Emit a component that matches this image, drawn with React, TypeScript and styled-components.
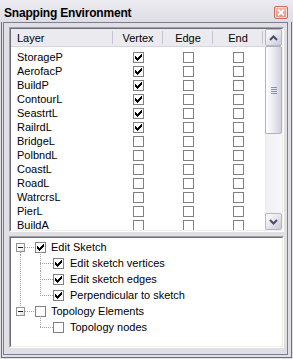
import React from 'react';
import styled, { createGlobalStyle, css } from 'styled-components';

const Global = createGlobalStyle`
  html, body { margin: 0; padding: 0; background: #fff; }
  body { font-family: "Liberation Sans", Arial, sans-serif; font-size: 11px; color: #000; }
  * { box-sizing: border-box; }
`;

const DOT = '#a3a3a3';

const Window = styled.div`
  width: 293px;
  height: 359px;
  display: flex;
  flex-direction: column;
  background: #e0dfe3;
`;

const TitleBar = styled.div`
  height: 22px;
  flex: none;
  display: flex;
  align-items: flex-start;
  justify-content: space-between;
  padding: 0 5px 0 4px;
  background: linear-gradient(#ecebf1, #dedde5);
`;

const Title = styled.span`
  font-weight: bold;
  font-size: 12px;
  letter-spacing: -0.2px;
  line-height: 14px;
  margin-top: 6px;
`;

const CloseBtn = styled.span`
  width: 14px;
  height: 13px;
  flex: none;
  margin-top: 6px;
  border: 1px solid #d06b5b;
  border-radius: 2px;
  background: linear-gradient(#f2b8aa, #e3907f);
  box-shadow: inset 0 0 0 1px #f9dcd5;
  display: flex;
  align-items: center;
  justify-content: center;
`;

const Body = styled.div`
  flex: 1;
  display: flex;
  margin: 0 1px 1px 1px;
  border: 1px solid #6c6c86;
  border-top: none;
  padding: 0 3px 2px 1px;
`;

const Frame = styled.div`
  flex: 1;
  display: flex;
  flex-direction: column;
  gap: 4px;
  border: 1px solid #7c7c96;
  padding: 4px 3px 6px 5px;
`;

const Well = styled.div<{ $h?: number }>`
  ${p => (p.$h ? css`height: ${p.$h}px; flex: none;` : css`flex: 1;`)}
  display: flex;
  border: 1px solid;
  border-color: #9f9fa6 #ffffff #ffffff #9f9fa6;
`;

const WellInner = styled.div<{ $dir?: 'row' | 'column' }>`
  flex: 1;
  display: flex;
  flex-direction: ${p => p.$dir || 'row'};
  min-height: 0;
  border: 1px solid;
  border-color: #6f6f78 #f1efe2 #f1efe2 #6f6f78;
  background: #fff;
  overflow: hidden;
`;

/* ---------- table ---------- */

const Table = styled.div`
  flex: 1;
  display: flex;
  flex-direction: column;
  min-width: 0;
`;

const Header = styled.div`
  height: 18px;
  flex: none;
  display: flex;
  background: #ebeaef;
  border-bottom: 1px solid #d6d5dd;
`;

const HeaderCell = styled.div<{ $w: number; $left?: boolean }>`
  width: ${p => p.$w}px;
  flex: none;
  padding: 2px 0 0 ${p => (p.$left ? 6 : 0)}px;
  line-height: 14px;
  text-align: ${p => (p.$left ? 'left' : 'center')};
  background: linear-gradient(#c6c5d1, #c6c5d1) right 2px / 1px 13px no-repeat;
`;

const Rows = styled.div`
  flex: 1;
  padding-top: 3px;
  overflow: hidden;
`;

const Row = styled.div`
  height: 14px;
  display: flex;
  align-items: center;
`;

const Cell = styled.div<{ $w: number; $left?: boolean }>`
  width: ${p => p.$w}px;
  flex: none;
  display: flex;
  align-items: center;
  justify-content: ${p => (p.$left ? 'flex-start' : 'center')};
  padding-left: ${p => (p.$left ? 6 : 0)}px;
  line-height: 14px;
  white-space: nowrap;
`;

/* ---------- scrollbar ---------- */

const ScrollBar = styled.div`
  width: 17px;
  flex: none;
  display: flex;
  flex-direction: column;
  background: linear-gradient(to right, #eeeef3, #f8f8fb);
`;

const ScrollBtn = styled.div`
  height: 17px;
  flex: none;
  border: 1px solid #b6b6c8;
  border-radius: 2px;
  background: linear-gradient(135deg, #fbfbfd 0%, #e3e3ec 55%, #c9c9d8 100%);
  display: flex;
  align-items: center;
  justify-content: center;
`;

const Thumb = styled.div<{ $h: number }>`
  height: ${p => p.$h}px;
  flex: none;
  border: 1px solid #b1b1c4;
  border-radius: 2px;
  background: linear-gradient(to right, #ffffff 0%, #ececf2 45%, #d0d0de 100%);
  display: flex;
  align-items: center;
  justify-content: center;
`;

const Grip = styled.div`
  width: 6px;
  height: 7px;
  background: repeating-linear-gradient(to bottom, #8f8fa8 0 1px, transparent 1px 2px);
`;

const Track = styled.div`
  flex: 1;
`;

/* ---------- checkbox ---------- */

const Box = styled.span`
  width: 11px;
  height: 11px;
  flex: none;
  border: 1px solid #808080;
  background: #fff;
  display: inline-flex;
  align-items: center;
  justify-content: center;
`;

const TICK =
  'M7 1h1v1h-1z M6 2h2v1h-2z M1 3h1v1h-1z M5 3h3v1h-3z M1 4h2v1h-2z M4 4h3v1h-3z M1 5h5v1h-5z M2 6h3v1h-3z M3 7h1v1h-1z';

function CheckBox({ checked }: { checked?: boolean }) {
  return (
    <Box>
      {checked && (
        <svg width="9" height="9" viewBox="0 0 9 9" shapeRendering="crispEdges">
          <path d={TICK} fill="#000" />
        </svg>
      )}
    </Box>
  );
}

/* ---------- tree ---------- */

const Tree = styled.div`
  flex: 1;
  padding-top: 1px;
`;

const TreeRow = styled.div`
  height: 16px;
  display: flex;
  align-items: center;
`;

const TreeLabel = styled.span<{ $gap: number }>`
  margin-left: ${p => p.$gap}px;
  line-height: 16px;
  white-space: nowrap;
`;

const vline = (top: string, bottom: string, left: number) => css`
  content: '';
  position: absolute;
  left: ${left}px;
  top: ${top};
  bottom: ${bottom};
  width: 1px;
  background: repeating-linear-gradient(to bottom, ${DOT} 0 1px, transparent 1px 2px);
`;

const ExpanderCell = styled.span<{ $prev?: boolean; $next?: boolean }>`
  position: relative;
  width: 24px;
  align-self: stretch;
  flex: none;
  display: flex;
  align-items: flex-start;
  ${p => p.$next && css`&::before { ${vline('13px', '0', 9)} }`}
  ${p => p.$prev && css`&::after { ${vline('0', '12px', 9)} }`}
`;

const Expander = styled.span`
  width: 9px;
  height: 9px;
  margin: 4px 0 0 5px;
  flex: none;
  border: 1px solid #939393;
  background: linear-gradient(135deg, #ffffff 40%, #dcdbe2 100%);
  display: flex;
  align-items: center;
  justify-content: center;
  &::before {
    content: '';
    width: 5px;
    height: 1px;
    background: #1e1e1e;
  }
`;

const HLine = styled.span`
  flex: 1;
  height: 1px;
  margin-top: 8px;
  background: repeating-linear-gradient(to right, ${DOT} 0 1px, transparent 1px 2px);
`;

const Guide = styled.span<{ $w: number; $line?: boolean }>`
  position: relative;
  width: ${p => p.$w}px;
  align-self: stretch;
  flex: none;
  ${p => p.$line && css`&::before { ${vline('0', '0', 9)} }`}
`;

const Elbow = styled.span<{ $last?: boolean; $first?: boolean }>`
  position: relative;
  width: 24px;
  align-self: stretch;
  flex: none;
  display: flex;
  &::before {
    ${p => vline(p.$first ? '-3px' : '0', p.$last ? '8px' : '0', 11)}
  }
  &::after {
    content: '';
    position: absolute;
    left: 11px;
    right: 0;
    top: 8px;
    height: 1px;
    background: repeating-linear-gradient(to right, ${DOT} 0 1px, transparent 1px 2px);
  }
`;

const layers: [string, boolean][] = [
  ['StorageP', true],
  ['AerofacP', true],
  ['BuildP', true],
  ['ContourL', true],
  ['SeastrtL', true],
  ['RailrdL', true],
  ['BridgeL', false],
  ['PolbndL', false],
  ['CoastL', false],
  ['RoadL', false],
  ['WatrcrsL', false],
  ['PierL', false],
  ['BuildA', false],
];

type Node = { label: string; checked: boolean; children: { label: string; checked: boolean }[] };

const tree: Node[] = [
  {
    label: 'Edit Sketch',
    checked: true,
    children: [
      { label: 'Edit sketch vertices', checked: true },
      { label: 'Edit sketch edges', checked: true },
      { label: 'Perpendicular to sketch', checked: true },
    ],
  },
  {
    label: 'Topology Elements',
    checked: false,
    children: [{ label: 'Topology nodes', checked: false }],
  },
];

const COLS = { layer: 102, col: 50 };

export default function App() {
  return (
    <>
      <Global />
      <Window>
        <TitleBar>
          <Title>Snapping Environment</Title>
          <CloseBtn>
            <svg width="8" height="7" viewBox="0 0 8 7">
              <path d="M1 0.5 L7 6.5 M7 0.5 L1 6.5" stroke="#fff" strokeWidth="1.8" />
            </svg>
          </CloseBtn>
        </TitleBar>
        <Body>
          <Frame>
            <Well $h={205}>
              <WellInner>
                <Table>
                  <Header>
                    <HeaderCell $w={COLS.layer} $left>Layer</HeaderCell>
                    <HeaderCell $w={COLS.col}>Vertex</HeaderCell>
                    <HeaderCell $w={COLS.col}>Edge</HeaderCell>
                    <HeaderCell $w={COLS.col}>End</HeaderCell>
                  </Header>
                  <Rows>
                    {layers.map(([name, v]) => (
                      <Row key={name}>
                        <Cell $w={COLS.layer} $left>{name}</Cell>
                        <Cell $w={COLS.col}><CheckBox checked={v} /></Cell>
                        <Cell $w={COLS.col}><CheckBox /></Cell>
                        <Cell $w={COLS.col}><CheckBox /></Cell>
                      </Row>
                    ))}
                  </Rows>
                </Table>
                <ScrollBar>
                  <ScrollBtn>
                    <svg width="9" height="6" viewBox="0 0 9 6">
                      <path d="M1 5 L4.5 1.5 L8 5" fill="none" stroke="#4b4b66" strokeWidth="2" />
                    </svg>
                  </ScrollBtn>
                  <Thumb $h={88}>
                    <Grip />
                  </Thumb>
                  <Track />
                  <ScrollBtn>
                    <svg width="9" height="6" viewBox="0 0 9 6">
                      <path d="M1 1 L4.5 4.5 L8 1" fill="none" stroke="#4b4b66" strokeWidth="2" />
                    </svg>
                  </ScrollBtn>
                </ScrollBar>
              </WellInner>
            </Well>
            <Well>
              <WellInner $dir="column">
                <Tree>
                  {tree.map((node, i) => {
                    const hasNext = i < tree.length - 1;
                    return (
                      <React.Fragment key={node.label}>
                        <TreeRow>
                          <ExpanderCell $prev={i > 0} $next={hasNext}>
                            <Expander />
                            <HLine />
                          </ExpanderCell>
                          <CheckBox checked={node.checked} />
                          <TreeLabel $gap={5}>{node.label}</TreeLabel>
                        </TreeRow>
                        {node.children.map((c, j) => (
                          <TreeRow key={c.label}>
                            <Guide $w={18} $line={hasNext} />
                            <Elbow $first={j === 0} $last={j === node.children.length - 1} />
                            <CheckBox checked={c.checked} />
                            <TreeLabel $gap={6}>{c.label}</TreeLabel>
                          </TreeRow>
                        ))}
                      </React.Fragment>
                    );
                  })}
                </Tree>
              </WellInner>
            </Well>
          </Frame>
        </Body>
      </Window>
    </>
  );
}
